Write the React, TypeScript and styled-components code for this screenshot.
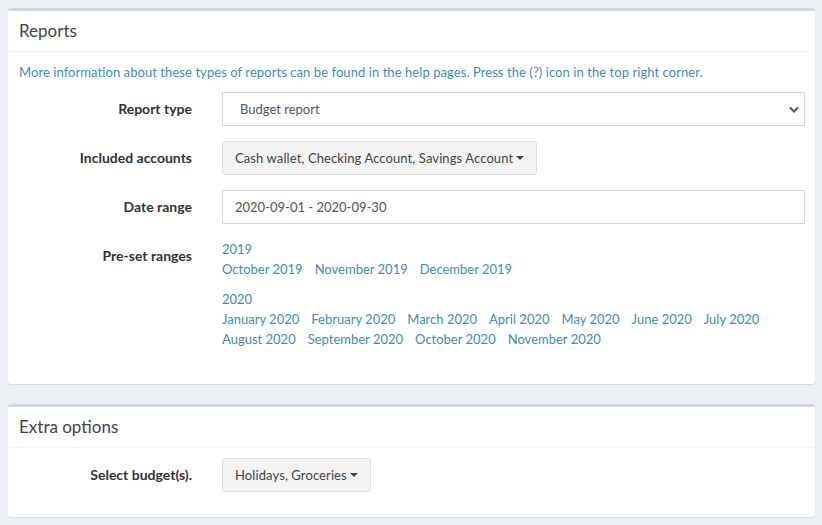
import styled, { createGlobalStyle } from "styled-components";

const GlobalStyle = createGlobalStyle`
  body {
    margin: 0;
    background-color: #ecf0f5;
    font-family: Lato, "Liberation Sans", sans-serif;
    font-size: 13px;
    line-height: 20px;
    color: #333;
  }
`

const Page = styled.div`
  padding: 8px 7px 8px 8px;
`
const Box = styled.section`
  background: #fff;
  border-top: 3px solid #d2d6de;
  border-radius: 3px;
  box-shadow: 0 1px 1px rgba(0, 0, 0, 0.1);
  margin-bottom: 20px;
`
const BoxHeader = styled.div`
  padding: 10px 11px;
  border-bottom: 1px solid #f4f4f4;
`
const BoxTitle = styled.h3`
  margin: 0;
  font-size: 17px;
  line-height: 20px;
  font-weight: 400;
  color: #444;
`
const BoxBody = styled.div`
  padding: 10px 10px 10px 11px;
`
const Intro = styled.p`
  margin: 0 0 10px;
  color: #3c8dbc;
  letter-spacing: 0.07px;
`
const FormGroup = styled.div`
  display: grid;
  grid-template-columns: 173px 1fr;
  column-gap: 30px;
  margin-bottom: 15px;
`
const Label = styled.label`
  text-align: right;
  font-weight: 700;
  font-size: 14px;
  padding-top: 7px;
  color: #333;
`
const SelectWrap = styled.div`
  position: relative;
`
const Select = styled.select`
  appearance: none;
  width: 100%;
  height: 34px;
  box-sizing: border-box;
  border: 1px solid #d2d6de;
  border-radius: 0;
  background: #fff;
  padding: 6px 30px 6px 17px;
  font-family: inherit;
  font-size: 13px;
  color: #555;
`
const Chevron = styled.svg`
  position: absolute;
  right: 6px;
  top: 14px;
  pointer-events: none;
`
const Input = styled.input`
  width: 100%;
  height: 34px;
  box-sizing: border-box;
  border: 1px solid #d2d6de;
  padding: 6px 12px;
  font-family: inherit;
  font-size: 13px;
  color: #555;
`
const DropButton = styled.button`
  justify-self: start;
  height: 34px;
  box-sizing: border-box;
  padding: 6px 12px;
  background: #f4f4f4;
  border: 1px solid #ddd;
  border-radius: 3px;
  font-family: inherit;
  font-size: 13px;
  line-height: 20px;
  color: #444;
  letter-spacing: 0.1px;
  display: inline-flex;
  align-items: center;
`
const Caret = styled.span`
  display: inline-block;
  width: 0;
  height: 0;
  margin-left: 3px;
  border-top: 4px solid #444;
  border-left: 4px solid transparent;
  border-right: 4px solid transparent;
`
const YearBlock = styled.div`
  margin-bottom: 10px;
`
const RangeLink = styled.a`
  color: #3c8dbc;
  text-decoration: none;
  white-space: nowrap;
`
const MonthRow = styled.div`
  display: flex;
  flex-wrap: wrap;
  column-gap: 12px;
`

const presets: { year: string; months: string[] }[] = [
  { year: "2019", months: ["October", "November", "December"] },
  {
    year: "2020",
    months: [
      "January", "February", "March", "April", "May", "June", "July",
      "August", "September", "October", "November",
    ],
  },
]

export default function App() {
  return (
    <>
      <GlobalStyle />
      <Page>
        <Box>
          <BoxHeader>
            <BoxTitle>Reports</BoxTitle>
          </BoxHeader>
          <BoxBody>
            <Intro>
              More information about these types of reports can be found in the help pages. Press the (?) icon in the top right corner.
            </Intro>
            <FormGroup>
              <Label>Report type</Label>
              <SelectWrap>
                <Select defaultValue="budget">
                  <option value="budget">Budget report</option>
                </Select>
                <Chevron width="10" height="7" viewBox="0 0 10 7">
                  <polyline points="1,1.5 5,5.5 9,1.5" fill="none" stroke="#555" strokeWidth="2" />
                </Chevron>
              </SelectWrap>
            </FormGroup>
            <FormGroup>
              <Label>Included accounts</Label>
              <DropButton type="button">
                Cash wallet, Checking Account, Savings Account <Caret />
              </DropButton>
            </FormGroup>
            <FormGroup>
              <Label>Date range</Label>
              <Input type="text" defaultValue="2020-09-01 - 2020-09-30" />
            </FormGroup>
            <FormGroup>
              <Label>Pre-set ranges</Label>
              <div>
                {presets.map((p) => (
                  <YearBlock key={p.year}>
                    <RangeLink href="#">{p.year}</RangeLink>
                    <MonthRow>
                      {p.months.map((m) => (
                        <RangeLink key={m} href="#">{m} {p.year}</RangeLink>
                      ))}
                    </MonthRow>
                  </YearBlock>
                ))}
              </div>
            </FormGroup>
          </BoxBody>
        </Box>
        <Box>
          <BoxHeader>
            <BoxTitle>Extra options</BoxTitle>
          </BoxHeader>
          <BoxBody>
            <FormGroup>
              <Label>Select budget(s).</Label>
              <DropButton type="button">
                Holidays, Groceries <Caret />
              </DropButton>
            </FormGroup>
          </BoxBody>
        </Box>
      </Page>
    </>
  );
}
